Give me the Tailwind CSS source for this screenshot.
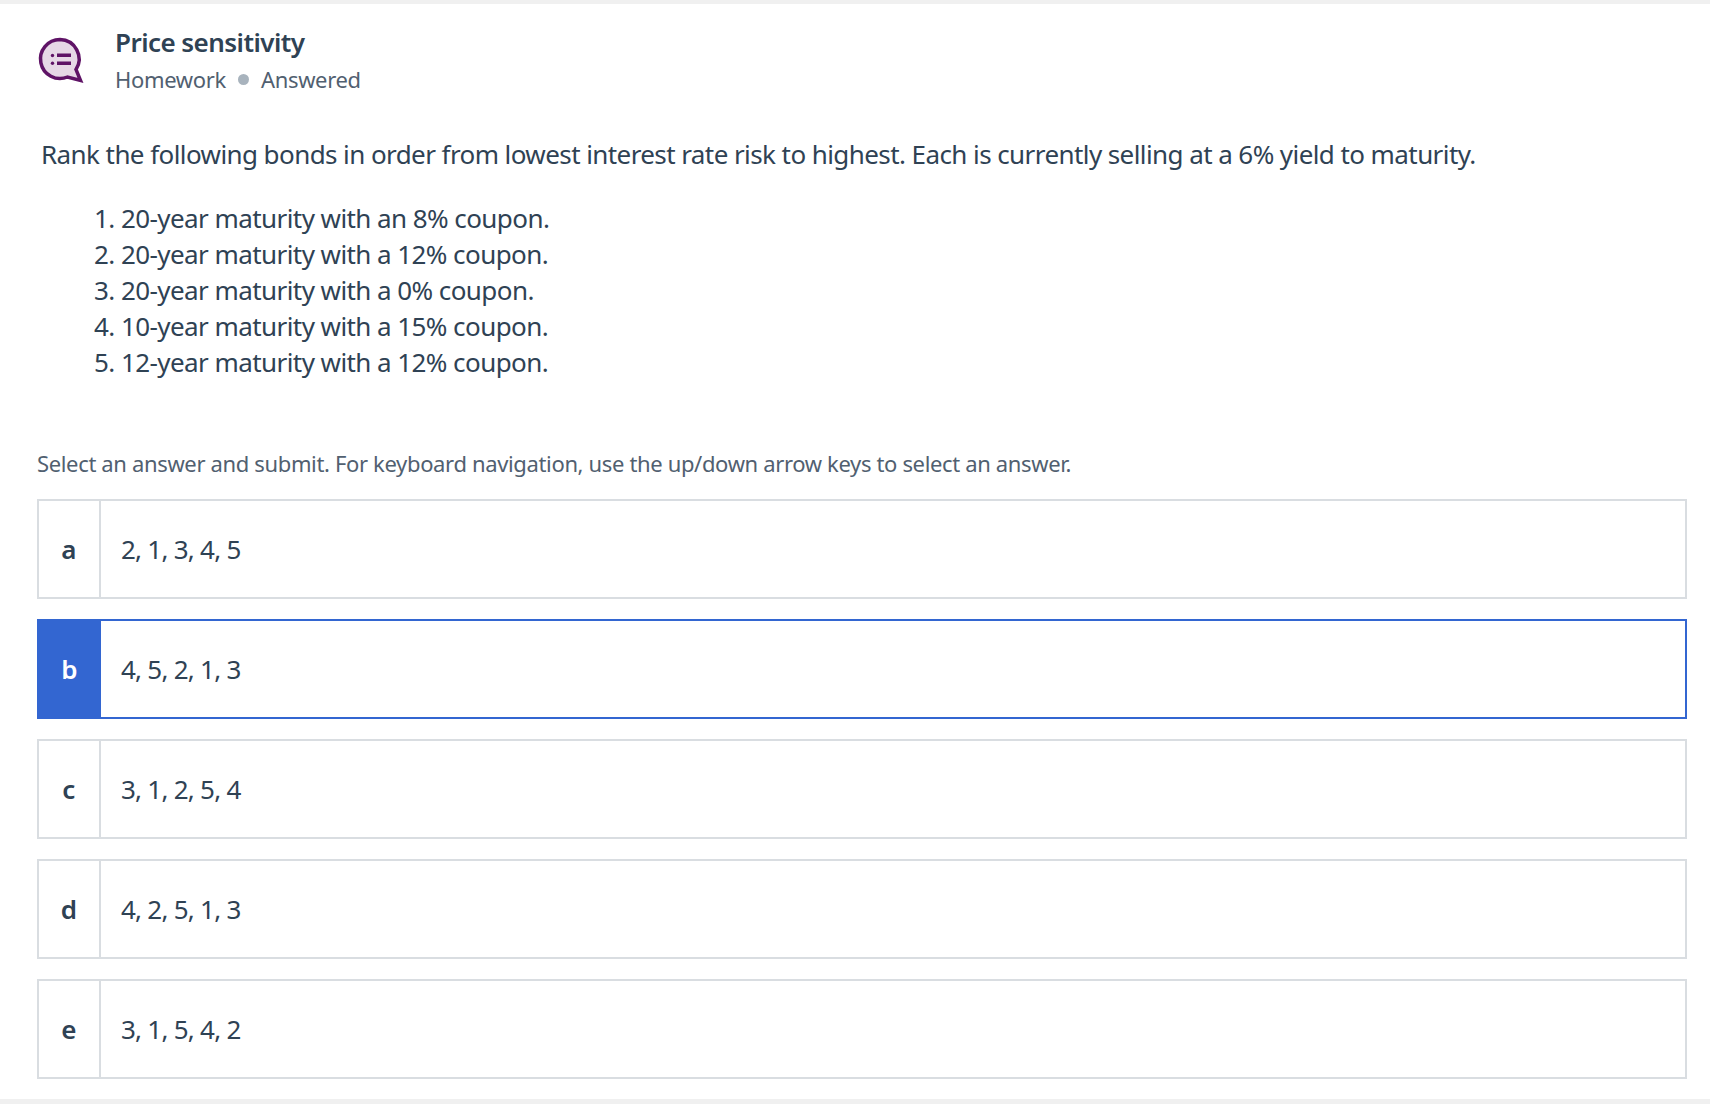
<!DOCTYPE html>
<html><head><meta charset="utf-8"><script src="https://cdn.jsdelivr.net/npm/@tailwindcss/browser@4"></script></head>
<body class="bg-white">
<div class="w-[1710px] h-[1104px] flex flex-col bg-white text-[#2f4254] font-['Noto_Sans',sans-serif] overflow-hidden">
  <div class="h-1 bg-[#f0f0f0]"></div>
  <div class="flex-1 pl-[37px] pr-[23px]">
    <header class="flex h-[96px]">
      <svg class="mt-[32px] w-[48px] h-[48px]" viewBox="38 36 48 48"><path d="M61 39.500A19.500 19.500 0 1 0 68.500 77L81.500 80.500 77 69.500A19.500 19.500 0 0 0 61 39.500Z" fill="#e6d8e6" stroke="#5f1366" stroke-width="3.500" stroke-linejoin="miter"/><rect x="58" y="53.500" width="14" height="3.500" fill="#5f1366"/><rect x="58" y="61.500" width="14" height="3.500" fill="#5f1366"/><circle cx="53.500" cy="55.500" r="1.700" fill="#5f1366"/><circle cx="53.500" cy="63.300" r="1.700" fill="#5f1366"/></svg>
      <div class="ml-[30px] pt-[23px]">
        <h1 class="text-[26px] leading-[31px] font-semibold tracking-[-0.55px]">Price sensitivity</h1>
        <div class="mt-[7px] flex items-center text-[22px] leading-[28px] text-[#516070] tracking-[-0.33px]"><span>Homework</span><span class="mx-[12px] w-[11px] h-[11px] rounded-full bg-[#a8b3bd]"></span><span>Answered</span></div>
      </div>
    </header>
    <p class="mt-[36px] ml-[4px] text-[26px] leading-[36px] tracking-[-0.58px] whitespace-nowrap">Rank the following bonds in order from lowest interest rate risk to highest. Each is currently selling at a 6% yield to maturity.</p>
    <ol class="mt-[28px] ml-[57px] text-[26px] leading-[36px] tracking-[-0.57px]">
      <li>1. 20-year maturity with an 8% coupon.</li>
      <li>2. 20-year maturity with a 12% coupon.</li>
      <li>3. 20-year maturity with a 0% coupon.</li>
      <li>4. 10-year maturity with a 15% coupon.</li>
      <li>5. 12-year maturity with a 12% coupon.</li>
    </ol>
    <p class="mt-[66px] mb-[19px] text-[22px] leading-[34px] text-[#516070] tracking-[-0.35px] whitespace-nowrap">Select an answer and submit. For keyboard navigation, use the up/down arrow keys to select an answer.</p>
    <div class="flex flex-col gap-5 text-[26px] tracking-[-0.75px]">
      <div class="h-[100px] flex border-2 border-[#d9dde1]"><div class="w-[62px] pr-[1px] border-r-2 border-[#d9dde1] flex items-center justify-center font-semibold">a</div><div class="flex items-center pl-[20px]">2, 1, 3, 4, 5</div></div>
      <div class="h-[100px] flex border-2 border-[#3366d1]"><div class="w-[62px] pr-[2px] bg-[#3366d1] text-white flex items-center justify-center font-semibold">b</div><div class="flex items-center pl-[20px]">4, 5, 2, 1, 3</div></div>
      <div class="h-[100px] flex border-2 border-[#d9dde1]"><div class="w-[62px] pr-[1px] border-r-2 border-[#d9dde1] flex items-center justify-center font-semibold">c</div><div class="flex items-center pl-[20px]">3, 1, 2, 5, 4</div></div>
      <div class="h-[100px] flex border-2 border-[#d9dde1]"><div class="w-[62px] pr-[1px] border-r-2 border-[#d9dde1] flex items-center justify-center font-semibold">d</div><div class="flex items-center pl-[20px]">4, 2, 5, 1, 3</div></div>
      <div class="h-[100px] flex border-2 border-[#d9dde1]"><div class="w-[62px] pr-[1px] border-r-2 border-[#d9dde1] flex items-center justify-center font-semibold">e</div><div class="flex items-center pl-[20px]">3, 1, 5, 4, 2</div></div>
    </div>
  </div>
  <div class="h-[5px] bg-[#f0f0f0]"></div>
</div>
</body></html>
